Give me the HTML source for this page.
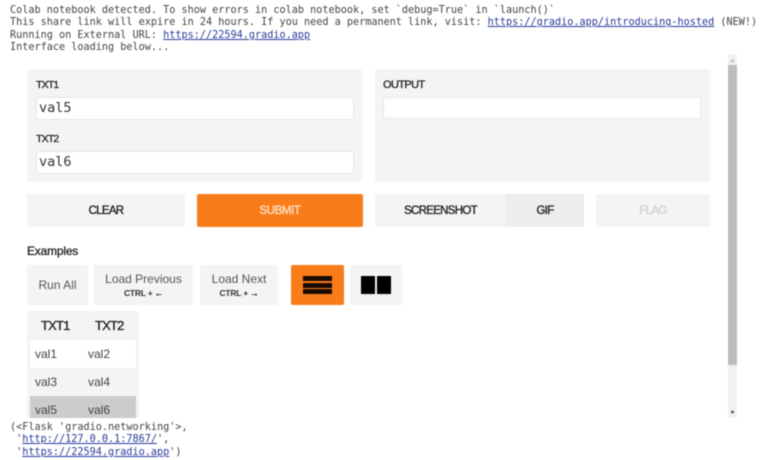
<!DOCTYPE html>
<html><head><meta charset="utf-8">
<style>
html,body{margin:0;padding:0;background:#fff;width:768px;height:460px;overflow:hidden}
#w{position:relative;width:768px;height:460px;filter:blur(.4px);font-family:"Liberation Sans",sans-serif;color:#222}
.a{position:absolute}
.m{position:absolute;left:10px;font:10.19px/12.4px "DejaVu Sans Mono",monospace;color:#444;white-space:pre}
.m a{color:#2a3a9a;text-decoration:underline}
.p{background:#f4f4f4;border-radius:3px}
.i{background:#fff;border:1px solid #e6e6e6;box-sizing:border-box;font:13.500px "DejaVu Sans Mono",monospace;color:#333;padding-left:2px;line-height:21px;border-radius:1px}
.l{font-size:10.500px;color:#222;letter-spacing:-.8px;line-height:14px;-webkit-text-stroke:.3px #222}
.b{display:flex;align-items:center;justify-content:center;font-size:11.500px;letter-spacing:-.7px;color:#222;box-sizing:border-box;border-radius:2px;text-align:center;padding-top:1px;-webkit-text-stroke:.35px currentColor}
.e{background:#f4f4f4;color:#555;flex-direction:column;font-size:12px;letter-spacing:0;line-height:14px;border-radius:2px;padding-top:0;-webkit-text-stroke:0}
.e small{font-size:8.500px;font-weight:700;color:#333;line-height:11px;letter-spacing:-.2px;margin-top:2px}
.e small b{-webkit-text-stroke:.4px #333}
.t{font-size:12px;color:#444;line-height:14px}
.h{font-size:13px;color:#222;line-height:16px;letter-spacing:-.8px;-webkit-text-stroke:.3px #222}
</style></head><body><div id="w">
<div class="m" style="top:5px">Colab notebook detected. To show errors in colab notebook, set `debug=True` in `launch()`
This share link will expire in 24 hours. If you need a permanent link, visit: <a>https://gradio.app/introducing-hosted</a> (NEW!)
Running on External URL: <a>https://22594.gradio.app</a>
Interface loading below...</div>

<div class="a p" style="left:27px;top:69px;width:335px;height:113px"></div>
<div class="a p" style="left:375px;top:69px;width:335px;height:113px"></div>
<div class="a l" style="left:36px;top:78px">TXT1</div>
<div class="a i" style="left:36px;top:97px;width:318px;height:23px">val5</div>
<div class="a l" style="left:36px;top:132px">TXT2</div>
<div class="a i" style="left:36px;top:151px;width:318px;height:23px">val6</div>
<div class="a l" style="left:383px;top:78px;font-size:11px;letter-spacing:-.6px">OUTPUT</div>
<div class="a i" style="left:383px;top:97px;width:318px;height:22px"></div>

<div class="a b" style="left:27px;top:194px;width:158px;height:33px;background:#f4f4f4">CLEAR</div>
<div class="a b" style="left:197px;top:194px;width:166px;height:33px;background:#f97c1a;color:#fde0c4;letter-spacing:-.4px">SUBMIT</div>
<div class="a b" style="left:375px;top:194px;width:131px;height:33px;background:#f4f4f4;border-radius:2px 0 0 2px">SCREENSHOT</div>
<div class="a b" style="left:506px;top:194px;width:78px;height:33px;background:#ededed;border-radius:0 2px 2px 0">GIF</div>
<div class="a b" style="left:596px;top:194px;width:114px;height:33px;background:#f4f4f4;color:#d0d0d0">FLAG</div>

<div class="a" style="left:27px;top:244px;font-size:12px;line-height:15px;color:#222;letter-spacing:-.2px;-webkit-text-stroke:.3px #222">Examples</div>
<div class="a b e" style="left:27px;top:265px;width:61px;height:40px">Run All</div>
<div class="a b e" style="left:94px;top:265px;width:99px;height:40px">Load Previous<small>CTRL + <b>←</b></small></div>
<div class="a b e" style="left:200px;top:265px;width:78px;height:40px">Load Next<small>CTRL + <b>→</b></small></div>
<div class="a" style="left:291px;top:265px;width:53px;height:40px;background:#f97c1a;border-radius:2px"></div>
<div class="a" style="left:303px;top:276px;width:29px;height:5px;background:#1a0a00"></div>
<div class="a" style="left:303px;top:282.500px;width:29px;height:5px;background:#1a0a00"></div>
<div class="a" style="left:303px;top:289px;width:29px;height:5px;background:#1a0a00"></div>
<div class="a" style="left:350px;top:265px;width:52px;height:40px;background:#f4f4f4;border-radius:2px"></div>
<div class="a" style="left:361px;top:276px;width:14px;height:18px;background:#000"></div>
<div class="a" style="left:377px;top:276px;width:14px;height:18px;background:#000"></div>

<div class="a" style="left:27px;top:311px;width:112px;height:107px;background:#f4f4f4"></div>
<div class="a h" style="left:41px;top:318px">TXT1</div>
<div class="a h" style="left:95px;top:318px">TXT2</div>
<div class="a" style="left:30px;top:340px;width:106px;height:28px;background:#fff"></div>
<div class="a" style="left:30px;top:396px;width:106px;height:22px;background:#ccc"></div>
<div class="a t" style="left:35px;top:347px">val1</div><div class="a t" style="left:88px;top:347px">val2</div>
<div class="a t" style="left:35px;top:375px">val3</div><div class="a t" style="left:88px;top:375px">val4</div>
<div class="a t" style="left:35px;top:403px">val5</div><div class="a t" style="left:88px;top:403px">val6</div>

<div class="a" style="left:728px;top:54px;width:9px;height:364px;background:#f1f1f1"></div>
<div class="a" style="left:728px;top:65px;width:9px;height:300px;background:#bdbdbd"></div>
<svg class="a" style="left:728px;top:54px" width="9" height="364"><path d="M2.500 8L4.500 5.500L6.500 8Z" fill="#aaa"/><path d="M2.500 357L6.500 357L4.500 360Z" fill="#444"/></svg>

<div class="m" style="top:422px">(&lt;Flask 'gradio.networking'&gt;,
 '<a>http://127.0.0.1:7867/</a>',
 '<a>https://22594.gradio.app</a>')</div>
</div></body></html>
